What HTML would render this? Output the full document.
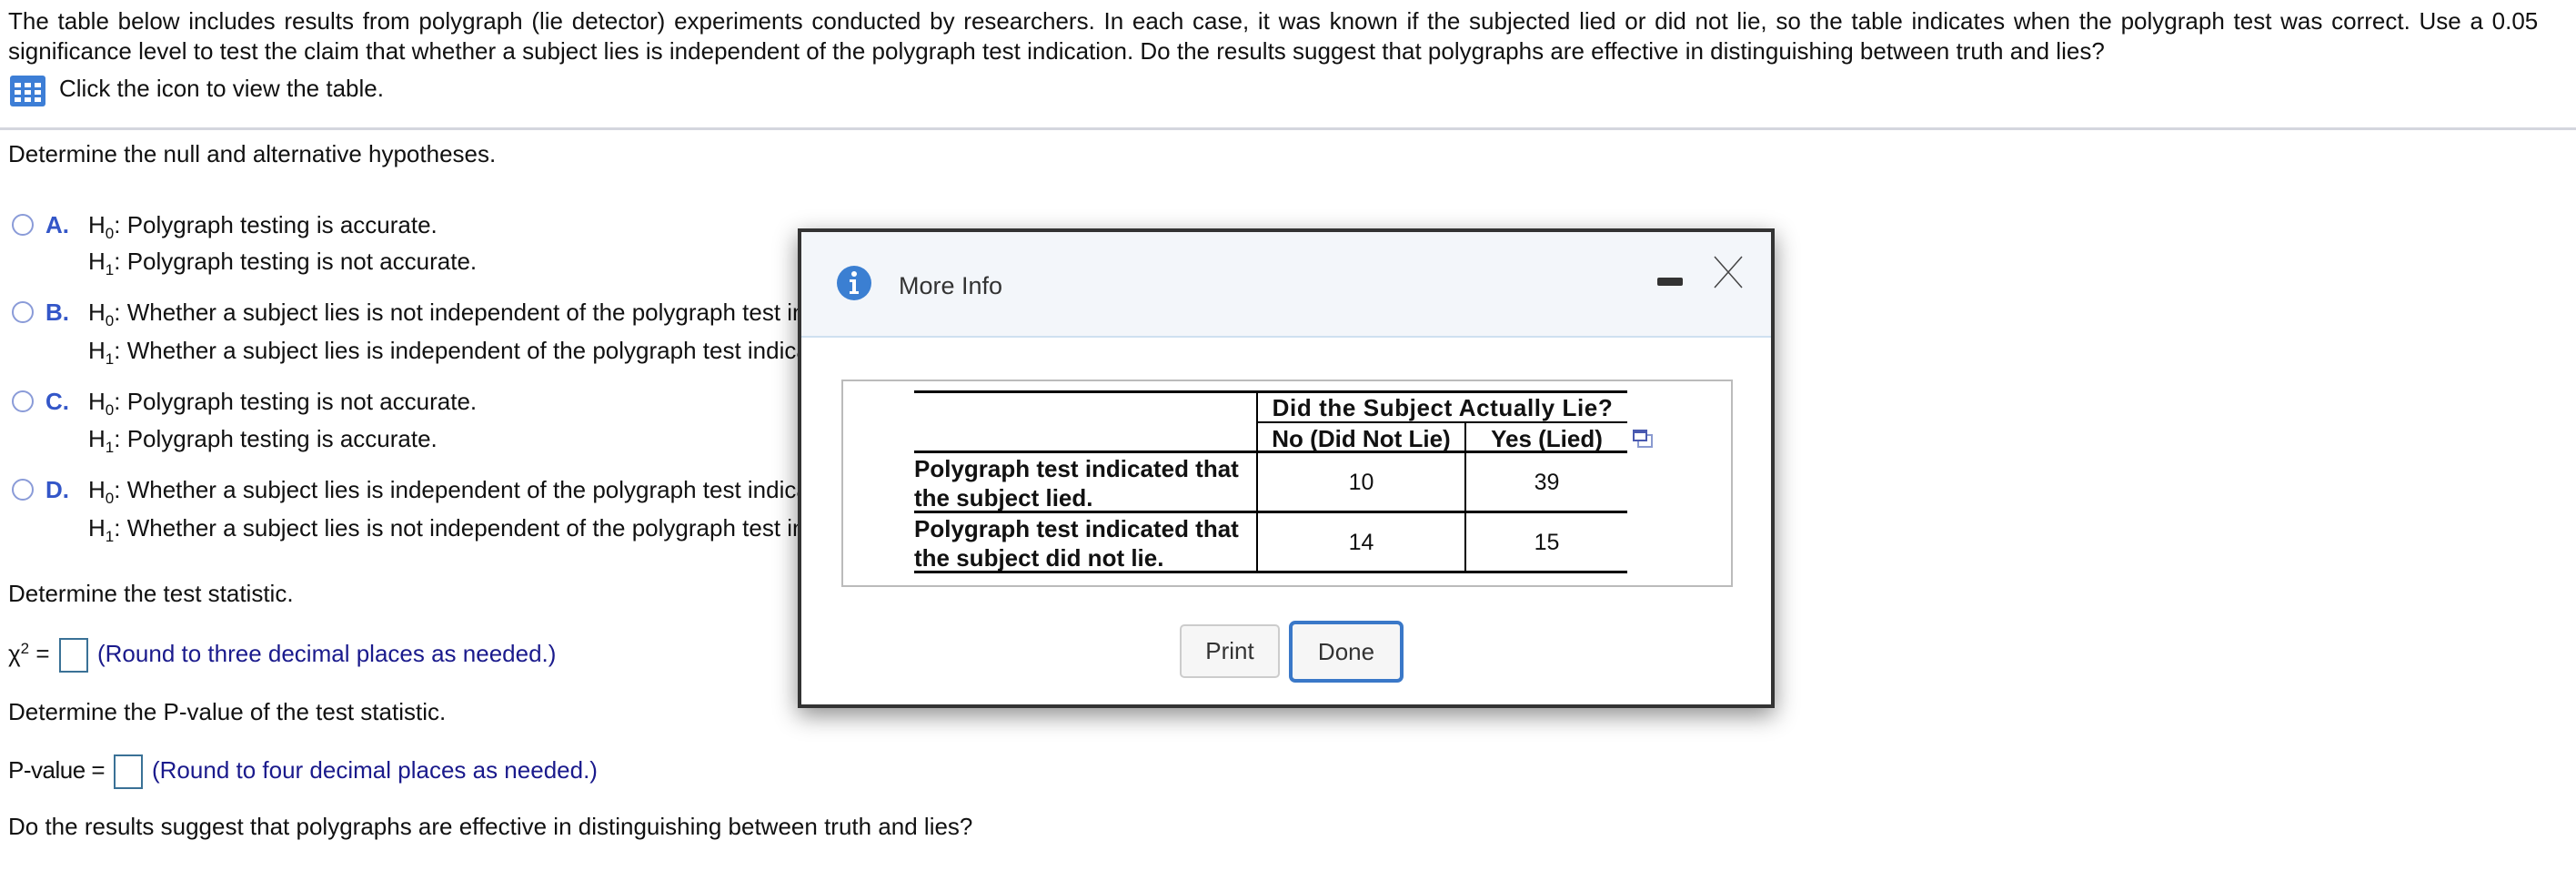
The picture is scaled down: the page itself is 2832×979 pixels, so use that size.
<!DOCTYPE html>
<html><head><meta charset="utf-8"><style>
*{margin:0;padding:0;box-sizing:border-box}
body{width:2832px;height:979px;background:#fff;font-family:"Liberation Sans",Arial,sans-serif;color:#111;position:relative;overflow:hidden;font-size:26px}
.t{position:absolute;white-space:nowrap;line-height:30px}
.blue{color:#1a1a8c}
.lbl{color:#3356c8;font-weight:bold}
.radio{position:absolute;width:24px;height:24px;border:2px solid #8a9bd8;border-radius:50%}
sub{font-size:17px;vertical-align:-6px;line-height:0}
sup{font-size:17px;vertical-align:9px;line-height:0}
.box{position:absolute;border:2px solid #3a7196;background:#fff}
.tb{font-weight:bold;font-size:26px}
</style></head><body>
<div class="t" style="left:9px;top:8px;word-spacing:2.5px">The table below includes results from polygraph (lie detector) experiments conducted by researchers. In each case, it was known if the subjected lied or did not lie, so the table indicates when the polygraph test was correct. Use a 0.05</div>
<div class="t" style="left:9px;top:41px">significance level to test the claim that whether a subject lies is independent of the polygraph test indication. Do the results suggest that polygraphs are effective in distinguishing between truth and lies?</div>
<svg style="position:absolute;left:11px;top:83px" width="39" height="34" viewBox="0 0 39 34"><rect x="0" y="0" width="39" height="34" rx="3" fill="#3d7ed6"/><g fill="#fff"><rect x="5" y="8" width="7" height="5"/><rect x="16" y="8" width="7" height="5"/><rect x="27" y="8" width="7" height="5"/><rect x="5" y="16" width="7" height="5"/><rect x="16" y="16" width="7" height="5"/><rect x="27" y="16" width="7" height="5"/><rect x="5" y="24" width="7" height="5"/><rect x="16" y="24" width="7" height="5"/><rect x="27" y="24" width="7" height="5"/></g></svg>
<div class="t" style="left:65px;top:82px">Click the icon to view the table.</div>
<div style="position:absolute;left:0;top:140px;width:2832px;height:3px;background:#d4d6de"></div>
<div class="t" style="left:9px;top:154px">Determine the null and alternative hypotheses.</div>

<div class="radio" style="left:13px;top:235px"></div><div class="t lbl" style="left:50px;top:232px">A.</div>
<div class="t" style="left:97px;top:232px">H<sub>0</sub>: Polygraph testing is accurate.</div>
<div class="t" style="left:97px;top:272px">H<sub>1</sub>: Polygraph testing is not accurate.</div>
<div class="radio" style="left:13px;top:331px"></div><div class="t lbl" style="left:50px;top:328px">B.</div>
<div class="t" style="left:97px;top:328px">H<sub>0</sub>: Whether a subject lies is not independent of the polygraph test indication.</div>
<div class="t" style="left:97px;top:370px">H<sub>1</sub>: Whether a subject lies is independent of the polygraph test indication.</div>
<div class="radio" style="left:13px;top:429px"></div><div class="t lbl" style="left:50px;top:426px">C.</div>
<div class="t" style="left:97px;top:426px">H<sub>0</sub>: Polygraph testing is not accurate.</div>
<div class="t" style="left:97px;top:467px">H<sub>1</sub>: Polygraph testing is accurate.</div>
<div class="radio" style="left:13px;top:526px"></div><div class="t lbl" style="left:50px;top:523px">D.</div>
<div class="t" style="left:97px;top:523px">H<sub>0</sub>: Whether a subject lies is independent of the polygraph test indication.</div>
<div class="t" style="left:97px;top:565px">H<sub>1</sub>: Whether a subject lies is not independent of the polygraph test indication.</div>

<div class="t" style="left:9px;top:637px">Determine the test statistic.</div>
<div class="t" style="left:9px;top:703px">χ<sup>2</sup> =</div>
<div class="box" style="left:65px;top:701px;width:32px;height:38px"></div>
<div class="t blue" style="left:107px;top:703px">(Round to three decimal places as needed.)</div>
<div class="t" style="left:9px;top:767px">Determine the P-value of the test statistic.</div>
<div class="t" style="left:9px;top:831px;letter-spacing:-0.5px">P-value =</div>
<div class="box" style="left:125px;top:829px;width:32px;height:38px"></div>
<div class="t blue" style="left:167px;top:831px">(Round to four decimal places as needed.)</div>
<div class="t" style="left:9px;top:893px">Do the results suggest that polygraphs are effective in distinguishing between truth and lies?</div>

<div style="position:absolute;left:877px;top:251px;width:1074px;height:527px;background:#fff;border:4px solid #333;box-shadow:0 8px 24px rgba(0,0,0,.45)">
 <div style="position:absolute;left:0;top:0;width:1066px;height:116px;background:#f3f6fa;border-bottom:2px solid #cfe0f0"></div>
 <svg style="position:absolute;left:38px;top:36px" width="40" height="40" viewBox="0 0 40 40"><circle cx="20" cy="20" r="19" fill="#3b7fd2"/><circle cx="20" cy="10" r="3" fill="#fff"/><path d="M15 16h7v13h3v3H15v-3h3V19h-3z" fill="#fff"/></svg>
 <div class="t" style="left:107px;top:44px;font-size:27px;color:#333">More Info</div>
 <div style="position:absolute;left:941px;top:50px;width:28px;height:9px;background:#333;border-radius:2px"></div>
 <svg style="position:absolute;left:1002px;top:26px" width="34" height="36"><path d="M2 1L32 35M32 1L2 35" stroke="#444" stroke-width="1.5" fill="none"/></svg>
 <div style="position:absolute;left:44px;top:162px;width:980px;height:228px;border:2px solid #bbb"></div>
 <div style="position:absolute;left:124px;top:174px;width:784px;height:3px;background:#000"></div>
 <div style="position:absolute;left:501px;top:208px;width:407px;height:2px;background:#000"></div>
 <div style="position:absolute;left:124px;top:240px;width:784px;height:3px;background:#000"></div>
 <div style="position:absolute;left:124px;top:306px;width:784px;height:3px;background:#000"></div>
 <div style="position:absolute;left:124px;top:372px;width:784px;height:3px;background:#000"></div>
 <div style="position:absolute;left:500px;top:174px;width:2px;height:200px;background:#000"></div>
 <div style="position:absolute;left:729px;top:208px;width:2px;height:166px;background:#000"></div>
 <div class="t tb" style="left:502px;top:178px;width:406px;text-align:center;letter-spacing:0.6px">Did the Subject Actually Lie?</div>
 <div class="t tb" style="left:502px;top:212px;width:227px;text-align:center">No (Did Not Lie)</div>
 <div class="t tb" style="left:731px;top:212px;width:177px;text-align:center">Yes (Lied)</div>
 <div class="t tb" style="left:124px;top:244px;line-height:32px">Polygraph test indicated that<br>the subject lied.</div>
 <div class="t tb" style="left:124px;top:310px;line-height:32px">Polygraph test indicated that<br>the subject did not lie.</div>
 <div class="t" style="left:502px;top:260px;width:227px;text-align:center;font-size:25px">10</div>
 <div class="t" style="left:731px;top:260px;width:177px;text-align:center;font-size:25px">39</div>
 <div class="t" style="left:502px;top:326px;width:227px;text-align:center;font-size:25px">14</div>
 <div class="t" style="left:731px;top:326px;width:177px;text-align:center;font-size:25px">15</div>
 <svg style="position:absolute;left:914px;top:217px" width="24" height="22"><rect x="6" y="6" width="15" height="13" fill="none" stroke="#8a9ad0" stroke-width="2"/><rect x="1" y="1" width="14" height="11" fill="#fff" stroke="#4a5ab0" stroke-width="2"/><rect x="1" y="1" width="14" height="3" fill="#4a5ab0"/></svg>
 <div style="position:absolute;left:416px;top:431px;width:110px;height:59px;border:2px solid #ccc;border-radius:5px;background:#f6f6f6;text-align:center;line-height:55px;font-size:26px;color:#333">Print</div>
 <div style="position:absolute;left:536px;top:427px;width:126px;height:68px;border:4px solid #3a78c8;border-radius:7px;background:#f6f6f6;text-align:center;line-height:60px;font-size:26px;color:#333">Done</div>
</div>
</body></html>
